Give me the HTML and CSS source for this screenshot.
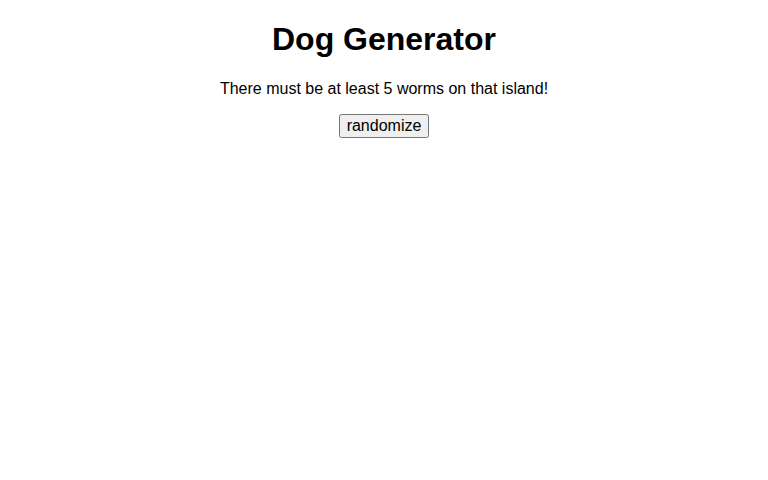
FILE: index.html
```html
<!DOCTYPE html>
<html>
<head>
<meta charset="utf-8">
<link rel="stylesheet" href="styles.css">
</head>
<body class="page">
<div class="app">
<h1 class="title">Dog Generator</h1>
<p class="message">There must be at least 5 worms on that island!</p>
<button class="randomize">randomize</button>
</div>
</body>
</html>
```
FILE: styles.css
```css
.page {
  margin: 0 8px;
  font-family: "Liberation Sans", Arial, sans-serif;
  color: #000;
  background: #fff;
}
.app {
  text-align: center;
}
.title {
  font-size: 32px;
  font-weight: bold;
  margin: 21.44px 0;
}
.message {
  font-size: 16px;
  margin: 16px 0;
}
.randomize {
  font-family: "Liberation Sans", Arial, sans-serif;
  font-size: 16px;
}
```
